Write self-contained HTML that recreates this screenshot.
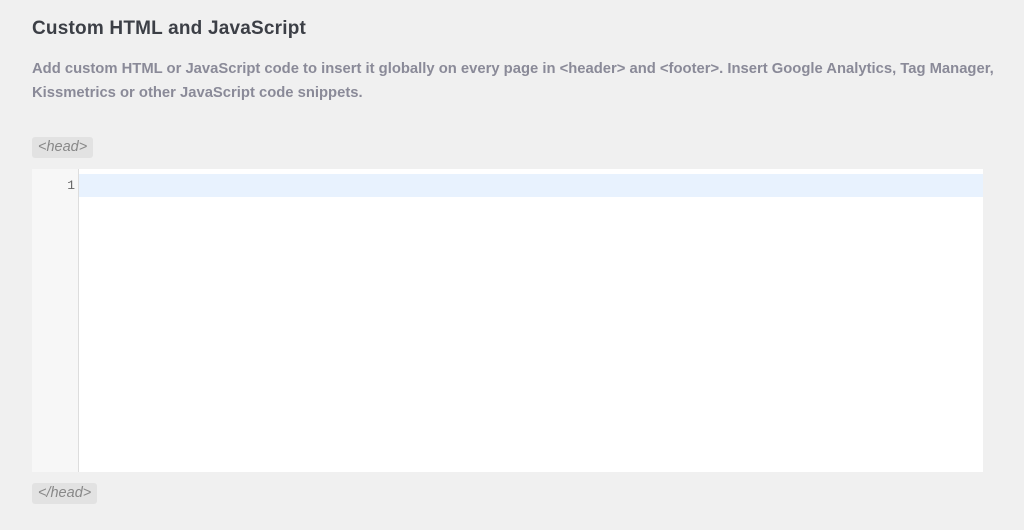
<!DOCTYPE html>
<html><head><meta charset="utf-8"><style>
html,body{margin:0;padding:0;background:#f0f0f0;width:1024px;height:530px;overflow:hidden;font-family:"Liberation Sans",sans-serif}
h1{position:absolute;left:32px;top:18px;margin:0;font-size:19px;font-weight:600;color:#3c3f46;letter-spacing:0.2px}
p{position:absolute;left:32px;top:57px;margin:0;width:990px;font-size:14.8px;line-height:24px;color:#8a8a98;font-weight:600}
.tag{position:absolute;left:32px;height:21px;line-height:21px;padding:0 6px;background:#e2e2e2;border-radius:3px;color:#888;font-style:italic;font-size:14.5px}
.ed{position:absolute;left:32px;top:169px;width:951px;height:303px;background:#fff}
.gut{position:absolute;left:0;top:0;width:46px;height:303px;background:#f7f7f7;border-right:1px solid #ddd}
.act{position:absolute;left:47px;top:5px;right:0;height:23px;background:#e8f2fe}
.ln{position:absolute;left:0;top:5px;width:43px;text-align:right;font-family:"Liberation Mono",monospace;font-size:13px;line-height:23px;color:#666}
</style></head><body>
<h1>Custom HTML and JavaScript</h1>
<p>Add custom HTML or JavaScript code to insert it globally on every page in &lt;header&gt; and &lt;footer&gt;. Insert Google Analytics, Tag Manager, Kissmetrics or other JavaScript code snippets.</p>
<div class="tag" style="top:137px">&lt;head&gt;</div>
<div class="ed"><div class="gut"></div><div class="act"></div><div class="ln">1</div></div>
<div class="tag" style="top:483px">&lt;/head&gt;</div>
</body></html>
